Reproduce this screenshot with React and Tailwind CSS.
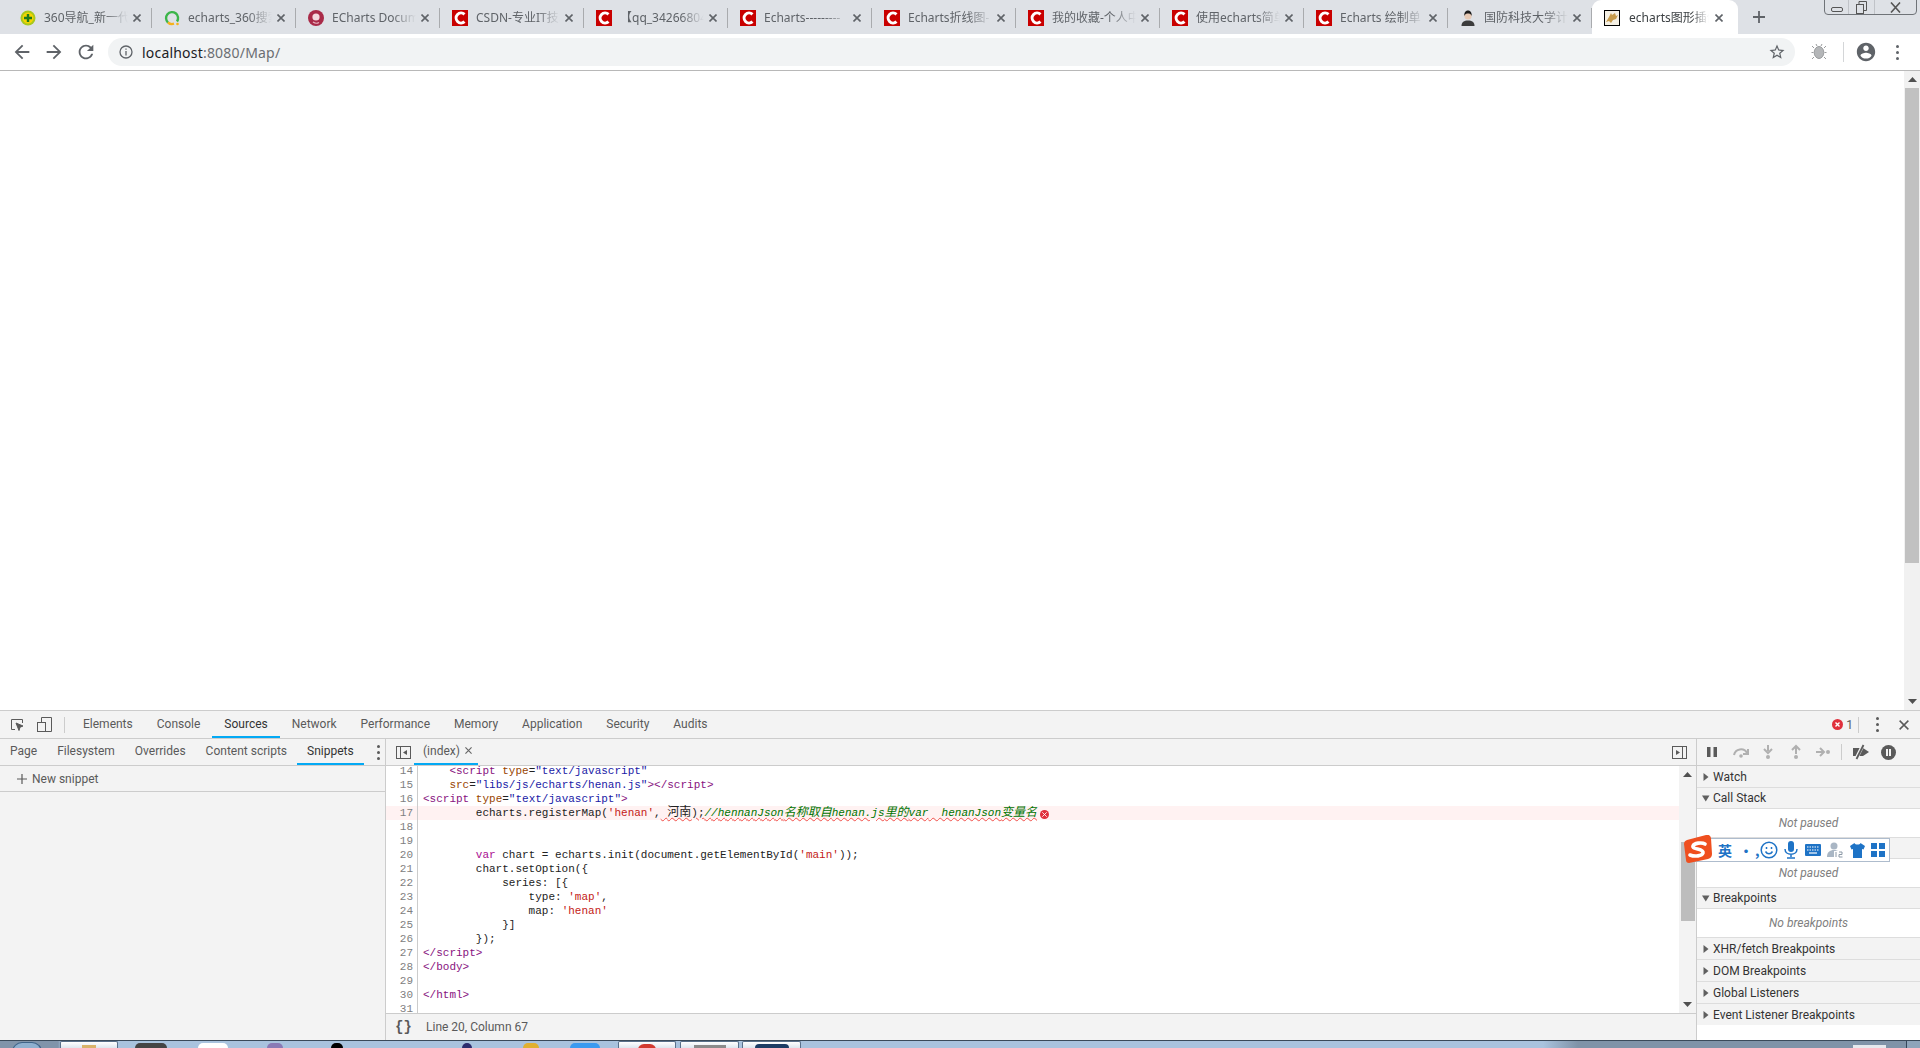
// App.jsx
const MONO = 'font-["Liberation_Mono","Noto_Sans_CJK_SC",monospace]';

const tabs = [
  { title: '360导航_新一代', icon: 'nav360' },
  { title: 'echarts_360搜索', icon: 'so' },
  { title: 'ECharts Documentation', icon: 'echarts' },
  { title: 'CSDN-专业IT技术社区', icon: 'csdn' },
  { title: '【qq_34266804', icon: 'csdn' },
  { title: 'Echarts---------', icon: 'csdn' },
  { title: 'Echarts折线图-', icon: 'csdn' },
  { title: '我的收藏-个人中心', icon: 'csdn' },
  { title: '使用echarts简单', icon: 'csdn' },
  { title: 'Echarts 绘制单', icon: 'csdn' },
  { title: '国防科技大学计算', icon: 'person' },
];

const Favicon = ({ type }) => {
  if (type === 'nav360') {
    return (
      <svg width="16" height="16" viewBox="0 0 16 16">
        <circle cx="8" cy="8" r="7.5" fill="#a8c81e" />
        <circle cx="8" cy="8" r="5.5" fill="#f6d500" />
        <path d="M8 4v8M4 8h8" stroke="#1c7a1c" strokeWidth="2.4" />
      </svg>
    );
  }
  if (type === 'so') {
    return (
      <svg width="16" height="16" viewBox="0 0 16 16" fill="none">
        <path d="M13 11.5A6 6 0 1 0 4 12.5" stroke="#3cb54a" strokeWidth="2.4" />
        <path d="M4 12.5a6 6 0 0 0 6 1.2" stroke="#f5b21b" strokeWidth="2.4" />
        <circle cx="13.5" cy="14" r="1.3" fill="#f5b21b" />
      </svg>
    );
  }
  if (type === 'echarts') {
    return (
      <svg width="16" height="16" viewBox="0 0 16 16">
        <circle cx="8" cy="8" r="8" fill="#a92a48" />
        <circle cx="8" cy="7" r="3.6" fill="#f4d9df" />
        <path d="M5 12c2 1.6 4 1.6 6 .4" stroke="#e8b0bd" strokeWidth="1.2" fill="none" />
      </svg>
    );
  }
  if (type === 'person') {
    return (
      <svg width="16" height="16" viewBox="0 0 16 16">
        <path d="M1.5 16c0-4 2.5-5.5 6.5-5.5s6.5 1.500 6.500 5.500z" fill="#3c3c3c" />
        <circle cx="8" cy="6" r="3.6" fill="#e7c9b4" />
        <path d="M4.300 6C4 2 6 .500 8 .500S12 2 11.700 6C11 4 9.500 3.600 8 3.600S5 4 4.300 6z" fill="#1c1c1c" />
      </svg>
    );
  }
  return (
    <svg width="16" height="16" viewBox="0 0 16 16">
      <rect width="16" height="16" fill="#c90000" />
      <path d="M12.500 4.300A5 5 0 1 0 12.500 11.700" fill="none" stroke="#fff" strokeWidth="3" />
    </svg>
  );
};

const CloseGlyph = ({ size = 8, color = '#5f6368', width = 1.6 }) => (
  <svg width={size} height={size} viewBox="0 0 8 8" stroke={color} strokeWidth={width}>
    <path d="M.5.500l7 7M7.500.500l-7 7" />
  </svg>
);

const Tab = ({ title, icon }) => (
  <div className="flex h-[34px] w-[144px] shrink-0 items-center pt-[1px]">
    <div className="ml-[12px] flex w-[16px] shrink-0 justify-center">
      <Favicon type={icon} />
    </div>
    <div className="ml-[8px] w-[84px] shrink-0 overflow-hidden whitespace-nowrap text-[12px] text-[#5f6368] [mask-image:linear-gradient(to_right,black_72%,transparent)]">
      {title}
    </div>
    <div className="ml-[5px] shrink-0">
      <CloseGlyph />
    </div>
    <div className="ml-[10px] h-[20px] w-px shrink-0 bg-[#a9abae]" />
  </div>
);

const TabStrip = () => (
  <div className='relative flex h-[34px] shrink-0 bg-[#dee1e6] font-["Noto_Sans","Noto_Sans_CJK_SC",sans-serif]'>
    <div className="flex w-[1592px] shrink-0 overflow-hidden pl-[8px]">
      {tabs.map((t, i) => (
        <Tab key={i} title={t.title} icon={t.icon} />
      ))}
    </div>
    <div className="flex h-[34px] w-[146px] shrink-0 items-center rounded-t-[9px] bg-white pt-[1px]">
      <div className="ml-[12px] flex h-[16px] w-[16px] items-center justify-center border border-black bg-[#f5f0e4]">
        <svg width="14" height="14" viewBox="0 0 14 14">
          <path d="M1 11l3-5 2-4 1 2 3-2 1 3 2-1-2 4-3 1-2 3-2-2z" fill="#c69a4a" />
        </svg>
      </div>
      <div className="ml-[9px] w-[80px] overflow-hidden whitespace-nowrap text-[12px] text-[#3c4043] [mask-image:linear-gradient(to_right,black_78%,transparent)]">
        echarts图形插件
      </div>
      <div className="ml-[6px]">
        <CloseGlyph />
      </div>
    </div>
    <div className="ml-[15px] flex h-[34px] items-center">
      <svg width="12" height="12" viewBox="0 0 12 12" stroke="#5f6368" strokeWidth="1.800">
        <path d="M6 0v12M0 6h12" />
      </svg>
    </div>
    {/* window buttons */}
    <div className="absolute right-[3px] top-[-1px] flex h-[16px] w-[93px] items-center rounded-b-[4px] border border-[#6f7378]">
      <div className="flex h-full w-[24px] items-center justify-center border-r border-r-[#c0c3c8]">
        <div className="mt-[5px] h-[5px] w-[12px] rounded-[2px] border border-[#555]" />
      </div>
      <div className="flex h-full w-[26px] items-center justify-center border-r border-r-[#c0c3c8]">
        <svg width="13" height="14" viewBox="0 0 13 14" fill="none" stroke="#555">
          <rect x="1.500" y="4.500" width="7" height="9" />
          <path d="M4 4V1.500h7.500v9H9" />
        </svg>
      </div>
      <div className="flex h-full flex-1 items-center justify-center">
        <svg width="11" height="11" viewBox="0 0 11 11" fill="none" stroke="#555">
          <path d="M1 .500l9 10M10 .500l-9 10" strokeWidth="1.600" />
        </svg>
      </div>
    </div>
  </div>
);

const ChromeIcon = ({ d, size = 22, color = '#5f6368' }) => (
  <svg width={size} height={size} viewBox="0 0 24 24" fill={color}>
    <path d={d} />
  </svg>
);

const AddressBar = () => (
  <div className="flex h-[37px] shrink-0 items-center border-b border-b-[#b8b8b8] bg-white py-[1px]">
    <div className="ml-[11px]">
      <ChromeIcon d="M20 11H7.830l5.590-5.590L12 4l-8 8 8 8 1.410-1.410L7.830 13H20v-2z" />
    </div>
    <div className="ml-[10px]">
      <ChromeIcon d="M12 4l-1.410 1.410L16.170 11H4v2h12.170l-5.580 5.590L12 20l8-8z" />
    </div>
    <div className="ml-[10px]">
      <ChromeIcon d="M17.650 6.350C16.200 4.900 14.210 4 12 4c-4.420 0-7.990 3.580-7.990 8s3.570 8 7.990 8c3.730 0 6.840-2.550 7.730-6h-2.080c-.820 2.330-3.040 4-5.650 4-3.310 0-6-2.690-6-6s2.690-6 6-6c1.660 0 3.140.690 4.220 1.780L13 11h7V4l-2.350 2.350z" />
    </div>
    <div className='ml-[11px] flex h-[28px] w-[1687px] items-center rounded-full bg-[#f1f3f4] font-["Noto_Sans",sans-serif]'>
      <div className="ml-[11px]">
        <svg width="14" height="14" viewBox="0 0 14 14" fill="none" stroke="#5f6368" strokeWidth="1.300">
          <circle cx="7" cy="7" r="6" />
          <path d="M7 6v4.500M7 3.500v1.300" />
        </svg>
      </div>
      <div className="ml-[9px] text-[14px] tracking-[0.2px] text-[#202124]">
        localhost<span className="text-[#6b6e72]">:8080/Map/</span>
      </div>
      <div className="ml-auto mr-[9px]">
        <ChromeIcon size={18} d="M22 9.240l-7.190-.620L12 2 9.190 8.630 2 9.240l5.460 4.730L5.820 21 12 17.270 18.180 21l-1.630-7.030L22 9.240zM12 15.400l-3.760 2.270 1-4.280-3.320-2.880 4.380-.380L12 6.100l1.710 4.040 4.380.380-3.320 2.880 1 4.280L12 15.400z" />
      </div>
    </div>
    <div className="ml-[16px]">
      <svg width="16" height="18" viewBox="0 0 16 18" fill="#b4b6b8" stroke="#9a9c9e" strokeWidth="1">
        <ellipse cx="8" cy="9.500" rx="4.800" ry="6" />
        <path d="M3 5L1 3M13 5l2-2M2.500 9.500H.500M13.500 9.500h2M3 14l-2 2M13 14l2 2M6 3L5 1M10 3l1-2" />
      </svg>
    </div>
    <div className="ml-[16px] h-[20px] w-px bg-[#d4d6d8]" />
    <div className="ml-[11px]">
      <ChromeIcon size={22} d="M12 2C6.480 2 2 6.480 2 12s4.480 10 10 10 10-4.480 10-10S17.520 2 12 2zm0 3c1.660 0 3 1.340 3 3s-1.340 3-3 3-3-1.340-3-3 1.340-3 3-3zm0 14.200c-2.500 0-4.710-1.280-6-3.220.030-1.990 4-3.080 6-3.080 1.990 0 5.970 1.090 6 3.080-1.290 1.940-3.500 3.220-6 3.220z" />
    </div>
    <div className="ml-[19px] flex flex-col gap-[3px]">
      <span className="h-[3px] w-[3px] rounded-full bg-[#5f6368]" />
      <span className="h-[3px] w-[3px] rounded-full bg-[#5f6368]" />
      <span className="h-[3px] w-[3px] rounded-full bg-[#5f6368]" />
    </div>
  </div>
);

const Arrow = ({ dir = 'up', color = '#505050' }) => (
  <svg width="9" height="5" viewBox="0 0 9 5" fill={color}>
    <path d={dir === 'up' ? 'M4.500 0L9 5H0z' : 'M0 0h9L4.500 5z'} />
  </svg>
);

const PageArea = () => (
  <div className="flex h-[639px] shrink-0 bg-white">
    <div className="flex-1" />
    <div className="flex w-[16px] flex-col items-center bg-[#f1f1f1]">
      <div className="flex h-[17px] items-center">
        <Arrow />
      </div>
      <div className="h-[475px] w-[14px] bg-[#c1c1c1]" />
      <div className="flex-1" />
      <div className="flex h-[17px] items-center">
        <Arrow dir="down" />
      </div>
    </div>
  </div>
);

const Sep = ({ className = '' }) => <div className={`h-[16px] w-px bg-[#ccc] ${className}`} />;

const mainTabs = ['Elements', 'Console', 'Sources', 'Network', 'Performance', 'Memory', 'Application', 'Security', 'Audits'];

const DevToolsBar = () => (
  <div className="flex h-[27px] shrink-0 items-center border-y border-y-[#ccc] bg-[#f3f3f3] box-content">
    <div className="ml-[10px]">
      <svg width="15" height="15" viewBox="0 0 15 15" fill="none" stroke="#5a5a5a" strokeWidth="1">
        <path d="M5 12.500H1.500v-10h11V6" />
        <path d="M6 6l7 3-3 1.200L9 13.500z" fill="#5a5a5a" />
      </svg>
    </div>
    <div className="ml-[12px]">
      <svg width="16" height="15" viewBox="0 0 16 15" fill="none" stroke="#5a5a5a" strokeWidth="1">
        <path d="M4.500 5V.500h10v14H9" />
        <rect x=".500" y="5.500" width="8" height="9" />
      </svg>
    </div>
    <Sep className="ml-[11px] mr-[6px]" />
    {mainTabs.map((t) => (
      <div
        key={t}
        className={`flex h-[27px] items-center whitespace-nowrap border-b-2 px-[12px] text-[12px] ${
          t === 'Sources' ? 'border-b-[#03a9f4] text-[#333]' : 'border-b-transparent text-[#5a5a5a]'
        }`}
      >
        {t}
      </div>
    ))}
    <div className="ml-auto flex items-center">
      <svg width="11" height="11" viewBox="0 0 11 11">
        <circle cx="5.500" cy="5.500" r="5.500" fill="#e0303c" />
        <path d="M3.500 3.500l4 4M7.500 3.500l-4 4" stroke="#fff" strokeWidth="1.400" />
      </svg>
      <span className="ml-[3px] text-[12px] text-[#5a5a5a]">1</span>
      <Sep className="ml-[5px]" />
      <div className="ml-[17px] flex flex-col gap-[3px]">
        <span className="h-[3px] w-[3px] rounded-full bg-[#5a5a5a]" />
        <span className="h-[3px] w-[3px] rounded-full bg-[#5a5a5a]" />
        <span className="h-[3px] w-[3px] rounded-full bg-[#5a5a5a]" />
      </div>
      <div className="ml-[20px] mr-[11px]">
        <CloseGlyph size={10} color="#5a5a5a" width={1.2} />
      </div>
    </div>
  </div>
);

const navTabs = ['Page', 'Filesystem', 'Overrides', 'Content scripts', 'Snippets'];

const Navigator = () => (
  <div className="flex w-[385px] shrink-0 flex-col border-r border-r-[#ccc] bg-[#f3f3f3] box-content">
    <div className="flex h-[26px] shrink-0 items-center border-b border-b-[#ccc] box-content">
      <div className="flex">
        {navTabs.map((t) => (
          <div
            key={t}
            className={`flex h-[26px] items-center whitespace-nowrap border-b-2 px-[10px] text-[12px] ${
              t === 'Snippets' ? 'border-b-[#03a9f4] text-[#333]' : 'border-b-transparent text-[#5a5a5a]'
            }`}
          >
            {t}
          </div>
        ))}
      </div>
      <div className="ml-[13px] flex flex-col gap-[3px]">
        <span className="h-[3px] w-[3px] rounded-full bg-[#5a5a5a]" />
        <span className="h-[3px] w-[3px] rounded-full bg-[#5a5a5a]" />
        <span className="h-[3px] w-[3px] rounded-full bg-[#5a5a5a]" />
      </div>
    </div>
    <div className="flex h-[26px] shrink-0 items-center border-b border-b-[#ccc] pl-[17px] text-[12px] text-[#5a5a5a]">
      <svg width="10" height="10" viewBox="0 0 10 10" stroke="#5a5a5a" strokeWidth="1.200">
        <path d="M5 0v10M0 5h10" />
      </svg>
      <span className="ml-[5px]">New snippet</span>
    </div>
  </div>
);

const PanelToggle = ({ flip = false }) => (
  <svg width="15" height="13" viewBox="0 0 15 13" fill="none" stroke="#5a5a5a" strokeWidth="1">
    <rect x=".500" y=".500" width="14" height="12" />
    {flip ? (
      <>
        <path d="M10.500 1v11" />
        <path d="M4 4l4 2.500L4 9z" fill="#5a5a5a" stroke="none" />
      </>
    ) : (
      <>
        <path d="M4.500 1v11" />
        <path d="M11 4L7 6.500 11 9z" fill="#5a5a5a" stroke="none" />
      </>
    )}
  </svg>
);

const T = ({ c, children }) => <span className={c}>{children}</span>;
const tag = 'text-[#881280]';
const attr = 'text-[#994500]';
const val = 'text-[#1a1aa6]';
const str = 'text-[#c41a16]';
const kw = 'text-[#aa0d91]';
const com = 'text-[#007400] italic';
const cjk = 'text-[12px]';

const codeLines = [
  [14, <>{'    '}<T c={tag}>&lt;script</T> <T c={attr}>type</T>=<T c={val}>"text/javascript"</T></>],
  [15, <>{'    '}<T c={attr}>src</T>=<T c={val}>"libs/js/echarts/henan.js"</T><T c={tag}>&gt;&lt;/script&gt;</T></>],
  [16, <><T c={tag}>&lt;script</T> <T c={attr}>type</T>=<T c={val}>"text/javascript"</T><T c={tag}>&gt;</T></>],
  [17, <>
    {'        echarts.registerMap('}<T c={str}>'henan'</T>,
    <span className="underline decoration-wavy decoration-[#f0504a] decoration-1">
      {' '}<T c={cjk}>河南</T>);<T c={com}>//hennanJson<T c={cjk}>名称取自</T>henan.js<T c={cjk}>里的</T>var{'  '}henanJson<T c={cjk}>变量名</T></T>
    </span>
    <span className="ml-[3px] inline-flex h-[9px] w-[9px] translate-y-[1px] items-center justify-center rounded-full bg-[#e0303c]">
      <CloseGlyph size={5} color="#fff" width={1.4} />
    </span>
  </>],
  [18, ''],
  [19, ''],
  [20, <>{'        '}<T c={kw}>var</T>{' chart = echarts.init(document.getElementById('}<T c={str}>'main'</T>{'));'}</>],
  [21, '        chart.setOption({'],
  [22, '            series: [{'],
  [23, <>{'                type: '}<T c={str}>'map'</T>,</>],
  [24, <>{'                map: '}<T c={str}>'henan'</T></>],
  [25, '            }]'],
  [26, '        });'],
  [27, <T c={tag}>&lt;/script&gt;</T>],
  [28, <T c={tag}>&lt;/body&gt;</T>],
  [29, ''],
  [30, <T c={tag}>&lt;/html&gt;</T>],
  [31, ''],
];

const CodeLine = ({ n, children }) => (
  <div className={`flex h-[14px] leading-[14px] ${n === 17 ? 'bg-[#fff2f2]' : ''}`}>
    <div className="w-[32px] shrink-0 border-r border-r-[#ccc] pr-[4px] text-right text-[#808080]">{n}</div>
    <div className="whitespace-pre pl-[5px] text-[#222]">{children}</div>
  </div>
);

const Editor = () => (
  <div className="flex min-w-0 flex-1 flex-col">
    <div className="flex h-[26px] shrink-0 items-center border-b border-b-[#ccc] bg-[#f3f3f3] box-content">
      <div className="ml-[10px]">
        <PanelToggle />
      </div>
      <div className="ml-[3px] flex h-[26px] w-[64px] items-center whitespace-nowrap border-b-2 border-b-[#03a9f4] pl-[9px] text-[12px] text-[#5a5a5a]">
        (index)
        <span className="ml-[5px] -translate-y-[1px]">
          <CloseGlyph size={7} color="#666" width={1.3} />
        </span>
      </div>
      <div className="ml-auto mr-[9px]">
        <PanelToggle flip />
      </div>
    </div>
    <div className="flex min-h-0 flex-1">
      <div className={`min-w-0 flex-1 overflow-hidden bg-white text-[11px] ${MONO}`}>
        <div className="-mt-[2px]">
          {codeLines.map(([n, code]) => (
            <CodeLine key={n} n={n}>{code}</CodeLine>
          ))}
        </div>
      </div>
      <div className="flex w-[17px] shrink-0 flex-col items-center bg-[#f3f3f3]">
        <div className="flex h-[17px] items-center">
          <Arrow />
        </div>
        <div className="mt-[59px] h-[79px] w-[14px] bg-[#bdbdbd]" />
        <div className="flex-1" />
        <div className="flex h-[17px] items-center">
          <Arrow dir="down" />
        </div>
      </div>
    </div>
    <div className="flex h-[26px] shrink-0 items-center border-t border-t-[#ccc] bg-[#f3f3f3] box-content text-[12px] text-[#5a5a5a]">
      <span className={`ml-[9px] w-[31px] text-[14px] font-bold ${MONO}`}>{'{}'}</span>
      <span>Line 20, Column 67</span>
    </div>
  </div>
);

const Pane = ({ title, open = false, h = 'h-[21px]' }) => (
  <div className={`flex ${h} shrink-0 items-center border-b border-b-[#ddd] bg-[#f3f3f3] pl-[5px] text-[12px] text-[#333] box-content`}>
    <svg width="8" height="8" viewBox="0 0 8 8" fill="#606060">
      <path d={open ? 'M0 1.500h7.500L3.750 7.500z' : 'M1.500 0v8L6.500 4z'} />
    </svg>
    <span className="ml-[3px]">{title}</span>
  </div>
);

const PaneBody = ({ children }) => (
  <div className="flex h-[28px] shrink-0 items-center justify-center border-b border-b-[#ddd] bg-white text-[12px] italic text-[#808080] box-content">
    {children}
  </div>
);

const DebugIcon = ({ children, ml }) => (
  <svg className={ml} width="16" height="16" viewBox="0 0 16 16">{children}</svg>
);

const DebuggerPanel = () => (
  <div className="flex w-[224px] shrink-0 flex-col border-l border-l-[#ccc] bg-white box-border">
    <div className="flex h-[26px] shrink-0 items-center border-b border-b-[#ccc] bg-[#f3f3f3] box-content">
      <DebugIcon ml="ml-[7px]"><path d="M3 3h3.500v10H3zM9.500 3H13v10H9.500z" fill="#5a5a5a" /></DebugIcon>
      <DebugIcon ml="ml-[13px]"><path d="M1 11a7 7 0 0 1 13-2M15 5v5h-5" fill="none" stroke="#b0b0b0" strokeWidth="2" /><circle cx="8" cy="12" r="1.800" fill="#b0b0b0" /></DebugIcon>
      <DebugIcon ml="ml-[11px]"><path d="M8 1v6M4 5l4 4 4-4" fill="none" stroke="#b0b0b0" strokeWidth="2" /><circle cx="8" cy="13" r="2" fill="#b0b0b0" /></DebugIcon>
      <DebugIcon ml="ml-[12px]"><path d="M8 10V3M4 6l4-4 4 4" fill="none" stroke="#b0b0b0" strokeWidth="2" /><circle cx="8" cy="13" r="2" fill="#b0b0b0" /></DebugIcon>
      <DebugIcon ml="ml-[11px]"><path d="M1 8h7M5 4l4 4-4 4" fill="none" stroke="#b0b0b0" strokeWidth="2" /><circle cx="13" cy="8" r="2" fill="#b0b0b0" /></DebugIcon>
      <div className="ml-[10px] h-[16px] w-px bg-[#ccc]" />
      <svg className="ml-[10px]" width="18" height="16" viewBox="0 0 18 16">
        <path d="M1 4h10l6 4-6 4H1z" fill="#5a5a5a" />
        <path d="M11 1L4 15" stroke="#f3f3f3" strokeWidth="3.500" />
        <path d="M11.500 1L4.500 15" stroke="#5a5a5a" strokeWidth="1.800" />
      </svg>
      <svg className="ml-[11px]" width="15" height="15" viewBox="0 0 15 15">
        <circle cx="7.500" cy="7.500" r="7.500" fill="#5a5a5a" />
        <path d="M5 4h2v7H5zM8 4h2v7H8z" fill="#f3f3f3" />
      </svg>
    </div>
    <Pane title="Watch" />
    <Pane title="Call Stack" open h="h-[20px]" />
    <PaneBody>Not paused</PaneBody>
    {/* this pane's header sits under the input method bar */}
    <div className="h-[20px] shrink-0 border-b border-b-[#ddd] bg-[#f3f3f3] box-content" />
    <PaneBody>Not paused</PaneBody>
    <Pane title="Breakpoints" open h="h-[20px]" />
    <PaneBody>No breakpoints</PaneBody>
    <Pane title="XHR/fetch Breakpoints" />
    <Pane title="DOM Breakpoints" />
    <Pane title="Global Listeners" />
    <div className="flex h-[21px] shrink-0 items-center bg-[#f3f3f3] pl-[5px] text-[12px] text-[#333]">
      <svg width="8" height="8" viewBox="0 0 8 8" fill="#606060"><path d="M1.500 0v8L6.500 4z" /></svg>
      <span className="ml-[3px]">Event Listener Breakpoints</span>
    </div>
  </div>
);

// sogou input method bar floating over the devtools
const ImeBar = () => (
  <div className='absolute left-[1684px] top-[835px] z-10 flex h-[28px] w-[206px] items-end font-["Noto_Sans_CJK_SC",sans-serif]'>
    <div className="mb-[1px] ml-[10px] flex h-[24px] w-[196px] items-center self-end border border-[#aebccd] bg-white pl-[22px] text-[#1e73c6]">
      <span className="w-[16px] shrink-0 text-center text-[14px] font-bold leading-none">英</span>
      <span className="ml-[6px] w-[16px] shrink-0 text-center text-[14px] font-bold leading-none tracking-[2px]">•,</span>
      <svg className="ml-[5px] shrink-0" width="18" height="18" viewBox="0 0 18 18" fill="none" stroke="#1e73c6" strokeWidth="1.500">
        <circle cx="9" cy="9" r="7.800" />
        <path d="M5.500 10.500c1.800 3 5.200 3 7 0" />
        <path d="M6.500 6v2M11.500 6v2" />
      </svg>
      <svg className="ml-[5px] shrink-0" width="16" height="18" viewBox="0 0 16 18" fill="#1e73c6">
        <rect x="5" y="0" width="6" height="11" rx="3" />
        <path d="M2 8c0 7 12 7 12 0M8 13v3M4 17h8" fill="none" stroke="#1e73c6" strokeWidth="1.500" />
      </svg>
      <svg className="ml-[6px] shrink-0" width="16" height="12" viewBox="0 0 16 12">
        <rect width="16" height="12" rx="1" fill="#1e73c6" />
        <path d="M2 3h12M2 6h12" stroke="#fff" strokeWidth="1.200" strokeDasharray="1.500 1" />
        <path d="M4 9h8" stroke="#fff" strokeWidth="1.200" />
      </svg>
      <svg className="ml-[6px] shrink-0" width="18" height="16" viewBox="0 0 18 16">
        <circle cx="7" cy="4" r="3.500" fill="#a9b6c4" />
        <path d="M0 15c0-5 3-7 7-7s7 2 7 7z" fill="#a9b6c4" />
        <rect x="7" y="9" width="11" height="7" fill="#fff" />
        <path d="M9 10v5M12 10h3v2.500h-3V15h3.500" stroke="#8b98a6" fill="none" />
      </svg>
      <svg className="ml-[5px] shrink-0" width="15" height="15" viewBox="0 0 15 15" fill="#1e73c6">
        <path d="M4.500 0L0 3l1.500 3.500L3 6v9h9V6l1.500.500L15 3l-4.500-3c-.500 2-5.500 2-6 0z" />
      </svg>
      <svg className="ml-[6px] shrink-0" width="14" height="14" viewBox="0 0 14 14" fill="#1e73c6">
        <path d="M0 0h6v6H0zM8 0h6v6H8zM0 8h6v6H0zM8 8h6v6H8z" />
      </svg>
    </div>
    <svg className="absolute left-0 top-0" width="28" height="28" viewBox="0 0 28 28">
      <path d="M3 5L22 0q4-1 5 3l1 16q0 4-4 5L5 28q-3 0-3-3L0 9q0-3 3-4z" fill="#ef4f1f" />
      <path d="M21 9c-3-2-11-1-12 2-1 4 11 2 10 7-1 3-8 4-13 2" fill="none" stroke="#fff" strokeWidth="3.600" strokeLinecap="round" />
    </svg>
  </div>
);

const TaskBtn = ({ w, ml, children }) => (
  <div style={{ width: w, marginLeft: ml }} className="flex h-[8px] shrink-0 items-start justify-center rounded-t-[2px] border-x border-t border-[#59708a] bg-gradient-to-b from-white to-[#d8e2ec]">
    {children}
  </div>
);

const TaskDot = ({ ml, w, className }) => (
  <div style={{ marginLeft: ml, width: w }} className={`mt-[2px] h-[6px] shrink-0 rounded-t-[5px] ${className}`} />
);

const Taskbar = () => (
  <div className="flex h-[8px] shrink-0 border-t border-t-[#3a4a5a] bg-[linear-gradient(to_right,#8094aa_58px,#a9c3de_62px,#a9c3de_1543px,#7f93a8_1578px)] box-border">
    <div className="ml-[12px] mt-[1px] h-[10px] w-[30px] shrink-0 rounded-t-full border border-[#3f6488] bg-[#8fb0cf]" />
    <TaskBtn w={58} ml={18}><div className="mt-[3px] h-[4px] w-[14px] bg-[#d9b36a]" /></TaskBtn>
    <TaskDot ml={17} w={32} className="bg-[#444]" />
    <TaskDot ml={31} w={30} className="bg-white" />
    <TaskDot ml={39} w={16} className="bg-[#8a7ab5]" />
    <TaskDot ml={48} w={12} className="bg-black" />
    <TaskDot ml={119} w={10} className="bg-[#2c2c6e]" />
    <TaskDot ml={51} w={16} className="bg-[#e0b030]" />
    <TaskDot ml={31} w={30} className="bg-[#3a9af0]" />
    <TaskBtn w={58} ml={18}><div className="mt-[2px] h-[6px] w-[18px] rounded-t-full bg-[#d23a30]" /></TaskBtn>
    <TaskBtn w={59} ml={4}><div className="mt-[3px] h-[4px] w-[32px] bg-[#8b8b8b]" /></TaskBtn>
    <TaskBtn w={59} ml={3}><div className="mt-[2px] h-[6px] w-[34px] rounded-t-[4px] bg-[#1c3c64]" /></TaskBtn>
    <div className="ml-auto mr-[20px] mt-[4px] h-[3px] w-[33px] bg-white/80" />
    <div className="h-[8px] w-[14px] shrink-0 border-l border-l-[#33465a] bg-[#8ea4ba]" />
  </div>
);

export default function App() {
  return (
    <div className='relative flex h-[1048px] w-[1920px] flex-col overflow-hidden bg-white font-["Roboto","Noto_Sans_CJK_SC",sans-serif]'>
      <TabStrip />
      <AddressBar />
      <PageArea />
      <DevToolsBar />
      <div className="flex min-h-0 flex-1">
        <Navigator />
        <Editor />
        <DebuggerPanel />
      </div>
      <Taskbar />
      <ImeBar />
    </div>
  );
}
